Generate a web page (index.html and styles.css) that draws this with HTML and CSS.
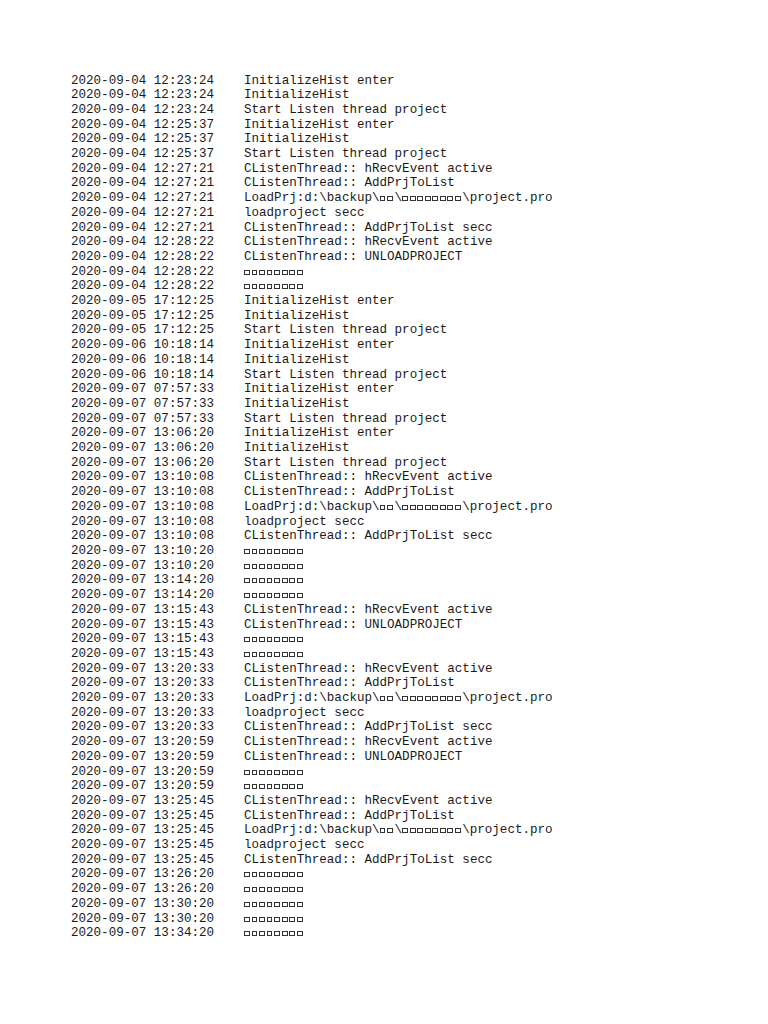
FILE: index.html
```html
<!DOCTYPE html>
<html>
<head>
<meta charset="utf-8">
<link rel="stylesheet" href="styles.css">
</head>
<body>
<div class="log">
<div class="row"><span class="ts">2020-09-04 12:23:24</span><span class="msg">InitializeHist enter</span></div>
<div class="row"><span class="ts">2020-09-04 12:23:24</span><span class="msg">InitializeHist</span></div>
<div class="row"><span class="ts">2020-09-04 12:23:24</span><span class="msg">Start Listen thread project</span></div>
<div class="row"><span class="ts">2020-09-04 12:25:37</span><span class="msg">InitializeHist enter</span></div>
<div class="row"><span class="ts">2020-09-04 12:25:37</span><span class="msg">InitializeHist</span></div>
<div class="row"><span class="ts">2020-09-04 12:25:37</span><span class="msg">Start Listen thread project</span></div>
<div class="row"><span class="ts">2020-09-04 12:27:21</span><span class="msg">CListenThread:: hRecvEvent active</span></div>
<div class="row"><span class="ts">2020-09-04 12:27:21</span><span class="msg">CListenThread:: AddPrjToList</span></div>
<div class="row"><span class="ts">2020-09-04 12:27:21</span><span class="msg">LoadPrj:d:\backup\<i></i><i></i>\<i></i><i></i><i></i><i></i><i></i><i></i><i></i><i></i>\project.pro</span></div>
<div class="row"><span class="ts">2020-09-04 12:27:21</span><span class="msg">loadproject secc</span></div>
<div class="row"><span class="ts">2020-09-04 12:27:21</span><span class="msg">CListenThread:: AddPrjToList secc</span></div>
<div class="row"><span class="ts">2020-09-04 12:28:22</span><span class="msg">CListenThread:: hRecvEvent active</span></div>
<div class="row"><span class="ts">2020-09-04 12:28:22</span><span class="msg">CListenThread:: UNLOADPROJECT</span></div>
<div class="row"><span class="ts">2020-09-04 12:28:22</span><span class="msg"><i></i><i></i><i></i><i></i><i></i><i></i><i></i><i></i></span></div>
<div class="row"><span class="ts">2020-09-04 12:28:22</span><span class="msg"><i></i><i></i><i></i><i></i><i></i><i></i><i></i><i></i></span></div>
<div class="row"><span class="ts">2020-09-05 17:12:25</span><span class="msg">InitializeHist enter</span></div>
<div class="row"><span class="ts">2020-09-05 17:12:25</span><span class="msg">InitializeHist</span></div>
<div class="row"><span class="ts">2020-09-05 17:12:25</span><span class="msg">Start Listen thread project</span></div>
<div class="row"><span class="ts">2020-09-06 10:18:14</span><span class="msg">InitializeHist enter</span></div>
<div class="row"><span class="ts">2020-09-06 10:18:14</span><span class="msg">InitializeHist</span></div>
<div class="row"><span class="ts">2020-09-06 10:18:14</span><span class="msg">Start Listen thread project</span></div>
<div class="row"><span class="ts">2020-09-07 07:57:33</span><span class="msg">InitializeHist enter</span></div>
<div class="row"><span class="ts">2020-09-07 07:57:33</span><span class="msg">InitializeHist</span></div>
<div class="row"><span class="ts">2020-09-07 07:57:33</span><span class="msg">Start Listen thread project</span></div>
<div class="row"><span class="ts">2020-09-07 13:06:20</span><span class="msg">InitializeHist enter</span></div>
<div class="row"><span class="ts">2020-09-07 13:06:20</span><span class="msg">InitializeHist</span></div>
<div class="row"><span class="ts">2020-09-07 13:06:20</span><span class="msg">Start Listen thread project</span></div>
<div class="row"><span class="ts">2020-09-07 13:10:08</span><span class="msg">CListenThread:: hRecvEvent active</span></div>
<div class="row"><span class="ts">2020-09-07 13:10:08</span><span class="msg">CListenThread:: AddPrjToList</span></div>
<div class="row"><span class="ts">2020-09-07 13:10:08</span><span class="msg">LoadPrj:d:\backup\<i></i><i></i>\<i></i><i></i><i></i><i></i><i></i><i></i><i></i><i></i>\project.pro</span></div>
<div class="row"><span class="ts">2020-09-07 13:10:08</span><span class="msg">loadproject secc</span></div>
<div class="row"><span class="ts">2020-09-07 13:10:08</span><span class="msg">CListenThread:: AddPrjToList secc</span></div>
<div class="row"><span class="ts">2020-09-07 13:10:20</span><span class="msg"><i></i><i></i><i></i><i></i><i></i><i></i><i></i><i></i></span></div>
<div class="row"><span class="ts">2020-09-07 13:10:20</span><span class="msg"><i></i><i></i><i></i><i></i><i></i><i></i><i></i><i></i></span></div>
<div class="row"><span class="ts">2020-09-07 13:14:20</span><span class="msg"><i></i><i></i><i></i><i></i><i></i><i></i><i></i><i></i></span></div>
<div class="row"><span class="ts">2020-09-07 13:14:20</span><span class="msg"><i></i><i></i><i></i><i></i><i></i><i></i><i></i><i></i></span></div>
<div class="row"><span class="ts">2020-09-07 13:15:43</span><span class="msg">CListenThread:: hRecvEvent active</span></div>
<div class="row"><span class="ts">2020-09-07 13:15:43</span><span class="msg">CListenThread:: UNLOADPROJECT</span></div>
<div class="row"><span class="ts">2020-09-07 13:15:43</span><span class="msg"><i></i><i></i><i></i><i></i><i></i><i></i><i></i><i></i></span></div>
<div class="row"><span class="ts">2020-09-07 13:15:43</span><span class="msg"><i></i><i></i><i></i><i></i><i></i><i></i><i></i><i></i></span></div>
<div class="row"><span class="ts">2020-09-07 13:20:33</span><span class="msg">CListenThread:: hRecvEvent active</span></div>
<div class="row"><span class="ts">2020-09-07 13:20:33</span><span class="msg">CListenThread:: AddPrjToList</span></div>
<div class="row"><span class="ts">2020-09-07 13:20:33</span><span class="msg">LoadPrj:d:\backup\<i></i><i></i>\<i></i><i></i><i></i><i></i><i></i><i></i><i></i><i></i>\project.pro</span></div>
<div class="row"><span class="ts">2020-09-07 13:20:33</span><span class="msg">loadproject secc</span></div>
<div class="row"><span class="ts">2020-09-07 13:20:33</span><span class="msg">CListenThread:: AddPrjToList secc</span></div>
<div class="row"><span class="ts">2020-09-07 13:20:59</span><span class="msg">CListenThread:: hRecvEvent active</span></div>
<div class="row"><span class="ts">2020-09-07 13:20:59</span><span class="msg">CListenThread:: UNLOADPROJECT</span></div>
<div class="row"><span class="ts">2020-09-07 13:20:59</span><span class="msg"><i></i><i></i><i></i><i></i><i></i><i></i><i></i><i></i></span></div>
<div class="row"><span class="ts">2020-09-07 13:20:59</span><span class="msg"><i></i><i></i><i></i><i></i><i></i><i></i><i></i><i></i></span></div>
<div class="row"><span class="ts">2020-09-07 13:25:45</span><span class="msg">CListenThread:: hRecvEvent active</span></div>
<div class="row"><span class="ts">2020-09-07 13:25:45</span><span class="msg">CListenThread:: AddPrjToList</span></div>
<div class="row"><span class="ts">2020-09-07 13:25:45</span><span class="msg">LoadPrj:d:\backup\<i></i><i></i>\<i></i><i></i><i></i><i></i><i></i><i></i><i></i><i></i>\project.pro</span></div>
<div class="row"><span class="ts">2020-09-07 13:25:45</span><span class="msg">loadproject secc</span></div>
<div class="row"><span class="ts">2020-09-07 13:25:45</span><span class="msg">CListenThread:: AddPrjToList secc</span></div>
<div class="row"><span class="ts">2020-09-07 13:26:20</span><span class="msg"><i></i><i></i><i></i><i></i><i></i><i></i><i></i><i></i></span></div>
<div class="row"><span class="ts">2020-09-07 13:26:20</span><span class="msg"><i></i><i></i><i></i><i></i><i></i><i></i><i></i><i></i></span></div>
<div class="row"><span class="ts">2020-09-07 13:30:20</span><span class="msg"><i></i><i></i><i></i><i></i><i></i><i></i><i></i><i></i></span></div>
<div class="row"><span class="ts">2020-09-07 13:30:20</span><span class="msg"><i></i><i></i><i></i><i></i><i></i><i></i><i></i><i></i></span></div>
<div class="row"><span class="ts">2020-09-07 13:34:20</span><span class="msg"><i></i><i></i><i></i><i></i><i></i><i></i><i></i><i></i></span></div>
</div>
</body>
</html>
```
FILE: styles.css
```css
html, body {
  margin: 0;
  padding: 0;
  background: #ffffff;
}
.log {
  padding: 73.5px 0 0 71px;
  font-family: "Liberation Mono", "DejaVu Sans Mono", monospace;
  font-size: 12.55px;
  line-height: 14.707px;
  color: #1a1a1a;
}
.row {
  display: flex;
  white-space: pre;
}
.ts {
  width: 173px;
  flex: none;
}
.msg i {
  display: inline-block;
  box-sizing: border-box;
  width: calc(1ch - 1.6px);
  margin-right: 1.6px;
  height: 5px;
  border: 1px solid #333;
  vertical-align: baseline;
}
```
